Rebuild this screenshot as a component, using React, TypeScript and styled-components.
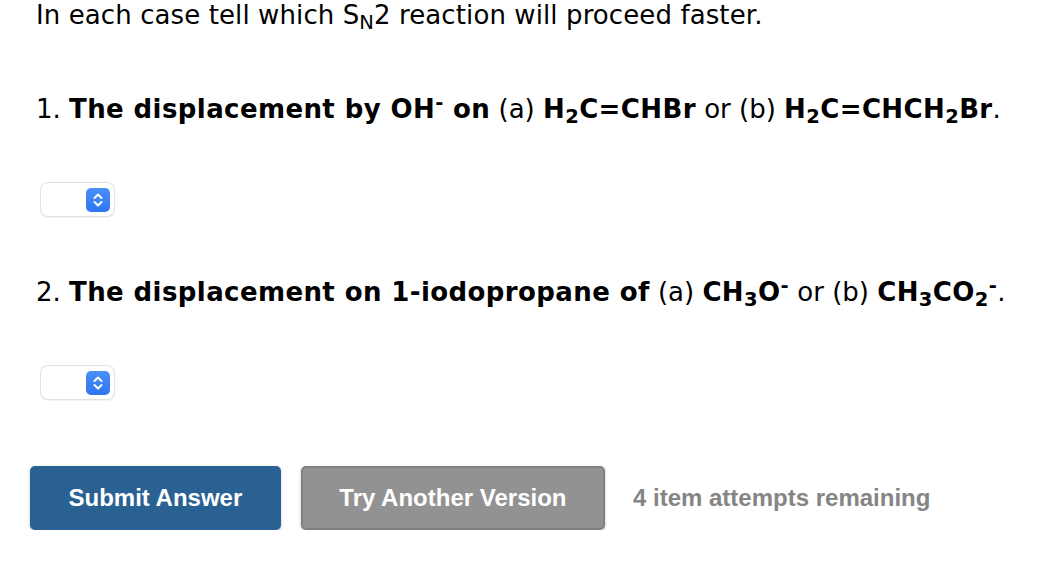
import React from "react";
import styled, { createGlobalStyle } from "styled-components";

const Global = createGlobalStyle`
  html, body {
    margin: 0;
    padding: 0;
    background: #ffffff;
  }
  body {
    font-family: "DejaVu Sans", Verdana, sans-serif;
    color: #000;
  }
`;

export default function App() {
  return (
    <>
      <Global />
      <Page>
        <Intro>
          In each case tell which S<Sub>N</Sub>2 reaction will proceed faster.
        </Intro>

        <Question>
          1. <b>The displacement by OH<Sup>-</Sup> on</b> (a){" "}
          <b>
            H<Sub>2</Sub>C=CHBr
          </b>{" "}
          or (b){" "}
          <b>
            H<Sub>2</Sub>C=CHCH<Sub>2</Sub>Br
          </b>
          .
        </Question>
        <SelectBox>
          <Stepper>
            <Chevrons />
          </Stepper>
        </SelectBox>

        <Question>
          2. <b>The displacement on 1-iodopropane of</b> (a){" "}
          <b>
            CH<Sub>3</Sub>O<Sup>-</Sup>
          </b>{" "}
          or (b){" "}
          <b>
            CH<Sub>3</Sub>CO<Sub>2</Sub>
            <Sup>-</Sup>
          </b>
          .
        </Question>
        <SelectBox>
          <Stepper>
            <Chevrons />
          </Stepper>
        </SelectBox>

        <Actions>
          <Button $tone="primary">Submit Answer</Button>
          <Button $tone="muted">Try Another Version</Button>
          <Remaining>4 item attempts remaining</Remaining>
        </Actions>
      </Page>
    </>
  );
}

function Chevrons() {
  return (
    <svg width="12" height="16" viewBox="0 0 12 16" fill="none">
      <path
        d="M2.5 6 L6 2.5 L9.5 6"
        stroke="#fff"
        strokeWidth="2"
        strokeLinecap="round"
        strokeLinejoin="round"
      />
      <path
        d="M2.5 10 L6 13.5 L9.5 10"
        stroke="#fff"
        strokeWidth="2"
        strokeLinecap="round"
        strokeLinejoin="round"
      />
    </svg>
  );
}

const Page = styled.div`
  padding: 0 0 0 36px;
  font-size: 26px;
  line-height: 30px;
`;

const Intro = styled.p`
  margin: 0 0 3px;
  padding-top: 0;
  letter-spacing: 0.1px;
`;

const Question = styled.p`
  margin: 0;
  padding-top: 61px;

  b {
    font-weight: bold;
    letter-spacing: 0.4px;
  }
`;

const Sub = styled.sub`
  font-size: 0.75em;
  line-height: 0;
  vertical-align: -0.25em;
`;

const Sup = styled.sup`
  font-size: 0.75em;
  line-height: 0;
  vertical-align: 0.45em;
`;

const SelectBox = styled.div`
  margin: 59px 0 0 5px;
  width: 73px;
  height: 33px;
  box-sizing: border-box;
  border-radius: 7px;
  background: #fff;
  box-shadow: 0 0 0 1px #e2e2e2, 0 1px 2px rgba(0, 0, 0, 0.18);
  display: flex;
  align-items: center;
  justify-content: flex-end;
  padding-right: 4px;
`;

const Stepper = styled.div`
  width: 24px;
  height: 24px;
  border-radius: 5px;
  background: linear-gradient(#4a8ff8, #2f76f0);
  display: flex;
  align-items: center;
  justify-content: center;
`;

const Actions = styled.div`
  display: flex;
  align-items: center;
  margin: 67px 0 0 -6px;
  gap: 20px;
`;

const Button = styled.button<{ $tone: "primary" | "muted" }>`
  height: 64px;
  padding: 0 36.5px;
  border-radius: 5px;
  font-family: "Liberation Sans", Arial, sans-serif;
  font-weight: bold;
  font-size: 24px;
  color: #fff;
  cursor: pointer;
  background: ${(p) => (p.$tone === "primary" ? "#2a6193" : "#929292")};
  border: 2px solid ${(p) => (p.$tone === "primary" ? "#2a6193" : "#808080")};
  box-shadow: 0 1px 3px rgba(0, 0, 0, 0.25);
`;

const Remaining = styled.span`
  margin-left: 8px;
  font-family: "Liberation Sans", Arial, sans-serif;
  font-weight: bold;
  font-size: 24px;
  color: #858585;
`;
